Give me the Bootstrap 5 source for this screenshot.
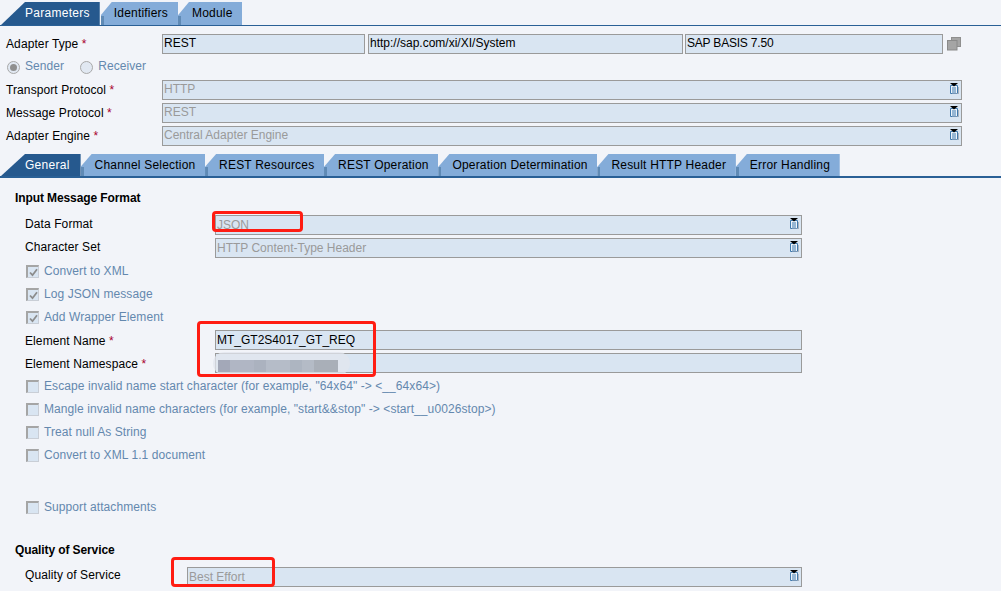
<!DOCTYPE html>
<html lang="en"><head><meta charset="utf-8"><title>Adapter</title>
<link rel="stylesheet" href="https://cdn.jsdelivr.net/npm/bootstrap@5.3.0/dist/css/bootstrap.min.css">
<style>
html,body{height:591px;overflow:hidden}
body{background:#f2f4f9;font:12px/20px "Liberation Sans",Arial,sans-serif;color:#000;letter-spacing:.1px;position:relative}
.tabstrip{height:23px;margin-top:2px;border-bottom:1px solid #2a6096;box-sizing:content-box}
.tabstrip.second{margin-top:5px;height:22px;border-bottom-width:2px}
.sap-tab{position:relative;height:100%;background:#84acd9;padding-left:14px;padding-right:9.7px;line-height:22px;letter-spacing:.2px;clip-path:polygon(0 100%,0 58%,11px 0,100% 0,100% 100%);white-space:nowrap}
.sap-tab::before{content:"";position:absolute;left:0;bottom:0;width:3px;height:9px;background:#5f8ab5}
.sap-tab.active{background:#26598e;color:#fff;letter-spacing:.27px;clip-path:polygon(0 100%,24px 0,100% 0,100% 100%);padding-left:24px;padding-right:10px;margin-left:1px}
.sap-tab.active::before{display:none}
.second .sap-tab.active{padding-right:11px}
.tabgap{margin-left:1px;padding-left:13px;padding-right:10px}
.rowline{height:23px;padding-left:6px}
.rowlow{height:23px}
.lbl-top{width:156px;flex:none}
.lbl-low{width:190px;flex:none}
.lbl-up{line-height:18px}
.lbl-qos{width:162px;flex:none;line-height:17px}
.lowrows{padding-left:25px}
.nudge{padding-top:1px}
.req{color:#a8002c}
.fieldbox{height:20px;background:#d9e5f2;border:1px solid #9a9a9a;padding-left:1px;line-height:17px;letter-spacing:0;overflow:hidden;position:relative;flex:none}
.fieldbox.dim{color:#9a9a9a}
.w-a{width:203px;margin-right:3px}.w-b{width:315px;margin-right:2px}.w-c{width:258px;letter-spacing:-.2px}
.w-top{width:800px}.w-low{width:587px;line-height:18px}.w-qos{width:615px;line-height:18px}
.vh{position:absolute;right:2px;top:1px}
.stack-ico{margin-left:4px;margin-top:3px}
.dis{color:#6488ae;letter-spacing:.08px}
.radiorow{line-height:18px}
.rad{width:13px;height:13px;border-radius:50%;border:1px solid #a9a9a9;background:#e1e8f2;margin-top:4px;margin-right:5px;display:flex;align-items:center;justify-content:center;flex:none}
.rad i{display:block;width:7px;height:7px;border-radius:50%;background:#8f8f8f}
.rad-first{margin-left:1px}
.rad-next{margin-left:16px}
.cb{width:13px;height:13px;flex:none;background:#d9e5f2;border:1px solid #a5a5a5;border-right-color:#c9ced6;border-bottom-color:#c9ced6;border-top-width:2px;border-left-width:2px;margin-top:4px;margin-left:1px;margin-right:5px;display:flex;align-items:center;justify-content:center}
.secthead{font-weight:700;color:#000;padding-left:15px;letter-spacing:-.1px}
.mt-head1{margin-top:10px;height:27px;line-height:20px}
.mt-gap{margin-top:29px}
.mt-head2{margin-top:20px;height:20px}
.qosrow{margin-top:7px}
.redbox{position:absolute;border:3px solid #ff1c12;border-radius:4px;pointer-events:none}
.rb1{left:212px;top:211px;width:91px;height:21px}
.rb2{left:197px;top:321px;width:179px;height:56px}
.rb3{left:171px;top:557px;width:104px;height:30px}
.smudge{position:absolute;left:213px;top:352px;width:137px;height:23px;border-radius:12px;background:rgba(226,229,237,.75)}
.mosaic{position:absolute;left:218px;top:360px;width:120px;height:12px;background:linear-gradient(90deg,#a3a8b8 0 12px,#b0b6c4 12px 36px,#abb2bf 36px 48px,#b5bcc8 48px 72px,#adb5c1 72px 84px,#b4bbc6 84px 96px,#a9afb8 96px 120px)}
</style></head><body>
<svg width="0" height="0" class="position-absolute"><defs>
<symbol id="vhelp" viewBox="0 0 10 12">
<path d="M1.5 3.5h7v8h-7z" fill="#eef4fa" stroke="#3f78ad"/><path d="M9.5 5v7H3" fill="none" stroke="#aab3be"/>
<path d="M3 6h4M3 8h4M3 10h4" stroke="#3f78ad"/><path d="M1 1h8L5 4.5z" fill="#000"/>
</symbol>
<symbol id="chk" viewBox="0 0 9 9"><path d="M1 4.5l2.5 2.7L8 1.2" fill="none" stroke="#8c8c8c" stroke-width="1.8"/></symbol>
</defs></svg>

<div class="tabstrip d-flex">
<div class="sap-tab active">Parameters</div>
<div class="sap-tab tabgap">Identifiers</div>
<div class="sap-tab">Module</div>
</div>

<div class="d-flex flex-column pt-2">
<div class="rowline d-flex">
<div class="lbl-top">Adapter Type <span class="req">*</span></div>
<div class="fieldbox w-a">REST</div><div class="fieldbox w-b">http://sap.com/xi/XI/System</div><div class="fieldbox w-c">SAP BASIS 7.50</div>
<svg class="stack-ico" width="14" height="14" viewBox="0 0 14 14"><rect x="4.5" y=".5" width="9" height="9" fill="#a5a5a5" stroke="#8f8f8f"/><rect x=".5" y="3.5" width="9.5" height="9.5" fill="#a5a5a5" stroke="#8a8a8a"/></svg>
</div>
<div class="rowline d-flex align-items-start dis radiorow">
<span class="rad rad-first"><i></i></span><span>Sender</span>
<span class="rad rad-next"></span><span>Receiver</span>
</div>
<div class="rowline d-flex"><div class="lbl-top">Transport Protocol <span class="req">*</span></div><div class="fieldbox dim w-top">HTTP<svg class="vh" width="10" height="12"><use href="#vhelp"/></svg></div></div>
<div class="rowline d-flex"><div class="lbl-top">Message Protocol <span class="req">*</span></div><div class="fieldbox dim w-top">REST<svg class="vh" width="10" height="12"><use href="#vhelp"/></svg></div></div>
<div class="rowline d-flex"><div class="lbl-top">Adapter Engine <span class="req">*</span></div><div class="fieldbox dim w-top">Central Adapter Engine<svg class="vh" width="10" height="12"><use href="#vhelp"/></svg></div></div>
</div>

<div class="tabstrip second d-flex">
<div class="sap-tab active">General</div>
<div class="sap-tab">Channel Selection</div>
<div class="sap-tab">REST Resources</div>
<div class="sap-tab">REST Operation</div>
<div class="sap-tab">Operation Determination</div>
<div class="sap-tab">Result HTTP Header</div>
<div class="sap-tab">Error Handling</div>
</div>

<div class="secthead mt-head1">Input Message Format</div>
<div class="lowrows">
<div class="rowlow d-flex"><div class="lbl-low lbl-up">Data Format</div><div class="fieldbox dim w-low">JSON<svg class="vh" width="10" height="12"><use href="#vhelp"/></svg></div></div>
<div class="rowlow d-flex"><div class="lbl-low lbl-up">Character Set</div><div class="fieldbox dim w-low">HTTP Content-Type Header<svg class="vh" width="10" height="12"><use href="#vhelp"/></svg></div></div>
<div class="rowlow d-flex dis"><span class="cb"><svg width="9" height="9"><use href="#chk"/></svg></span>Convert to XML</div>
<div class="rowlow d-flex dis"><span class="cb"><svg width="9" height="9"><use href="#chk"/></svg></span>Log JSON message</div>
<div class="rowlow d-flex dis"><span class="cb"><svg width="9" height="9"><use href="#chk"/></svg></span>Add Wrapper Element</div>
<div class="rowlow d-flex"><div class="lbl-low nudge">Element Name <span class="req">*</span></div><div class="fieldbox w-low">MT_GT2S4017_GT_REQ</div></div>
<div class="rowlow d-flex"><div class="lbl-low nudge">Element Namespace <span class="req">*</span></div><div class="fieldbox w-low"></div></div>
<div class="rowlow d-flex dis"><span class="cb"></span>Escape invalid name start character (for example, "64x64" -&gt; &lt;__64x64&gt;)</div>
<div class="rowlow d-flex dis"><span class="cb"></span>Mangle invalid name characters (for example, "start&amp;&amp;stop" -&gt; &lt;start__u0026stop&gt;)</div>
<div class="rowlow d-flex dis"><span class="cb"></span>Treat null As String</div>
<div class="rowlow d-flex dis"><span class="cb"></span>Convert to XML 1.1 document</div>
<div class="rowlow d-flex dis mt-gap"><span class="cb"></span>Support attachments</div>
</div>
<div class="secthead mt-head2">Quality of Service</div>
<div class="lowrows qosrow">
<div class="rowlow d-flex"><div class="lbl-qos">Quality of Service</div><div class="fieldbox dim w-qos">Best Effort<svg class="vh" width="10" height="12"><use href="#vhelp"/></svg></div></div>
</div>

<div class="smudge"></div><div class="mosaic"></div>
<div class="redbox rb1"></div><div class="redbox rb2"></div><div class="redbox rb3"></div>
<script src="https://cdn.jsdelivr.net/npm/bootstrap@5.3.0/dist/js/bootstrap.bundle.min.js"></script>
</body></html>
